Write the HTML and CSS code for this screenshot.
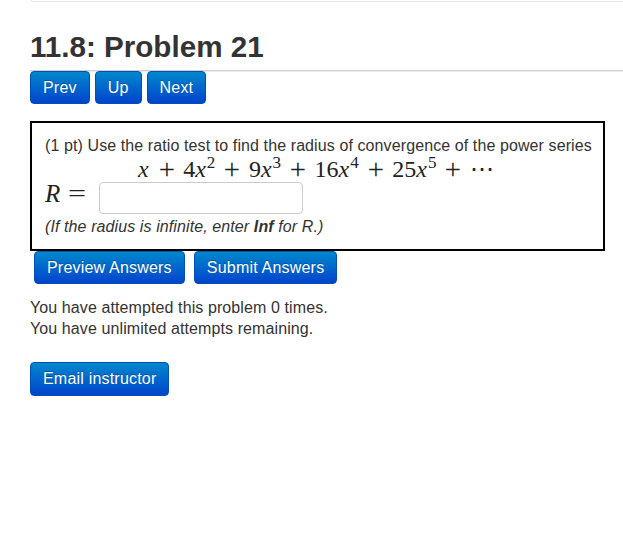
FILE: index.html
```html
<!DOCTYPE html>
<html>
<head>
<meta charset="utf-8">
<link rel="stylesheet" href="styles.css">
</head>
<body>
<div class="page">
  <div class="topbox"></div>
  <h1 class="title">11.8: Problem 21</h1>
  <div class="rule"></div>
  <div class="nav">
    <a class="btn">Prev</a>
    <a class="btn">Up</a>
    <a class="btn">Next</a>
  </div>
  <div class="problem">
    <div class="statement">(1 pt) Use the ratio test to find the radius of convergence of the power series</div>
    <div class="math"><i>x</i><span class="op">+</span>4<i>x</i><sup>2</sup><span class="op">+</span>9<i>x</i><sup>3</sup><span class="op">+</span>16<i>x</i><sup>4</sup><span class="op">+</span>25<i>x</i><sup>5</sup><span class="op">+</span><span class="dots">⋯</span></div>
    <div class="answer"><span class="rlabel"><i>R</i><span class="eq">=</span></span><span class="input"></span></div>
    <div class="hint">(If the radius is infinite, enter <b>Inf</b> for R.)</div>
  </div>
  <div class="actions">
    <a class="btn">Preview Answers</a>
    <a class="btn">Submit Answers</a>
  </div>
  <p class="attempts">You have attempted this problem 0 times.<br>You have unlimited attempts remaining.</p>
  <div class="email"><a class="btn btn-tall">Email instructor</a></div>
</div>
</body>
</html>
```

FILE: styles.css
```css
html, body {
  margin: 0;
  padding: 0;
  background: #fff;
}
body {
  font-family: "Liberation Sans", Arial, sans-serif;
  color: #333;
  font-size: 16px;
  letter-spacing: 0.1px;
}
.page {
  padding-left: 30px;
  overflow: hidden;
}
.topbox {
  height: 1px;
  margin-left: 1px;
  margin-right: -10px;
  border: 1px solid #e3e3e3;
  border-top: none;
  border-radius: 0 0 0 4px;
}
.title {
  margin: 28px 0 0 0;
  font-size: 29.6px;
  line-height: 33px;
  font-weight: bold;
  letter-spacing: 0;
  color: #333;
}
.rule {
  margin-top: 7px;
  height: 0;
  border-top: 1px solid #cfcfcf;
  border-bottom: 1px solid #eeeeee;
}
.nav {
  display: flex;
  gap: 5px;
  margin-top: -1px;
}
.btn {
  display: inline-block;
  font-size: 16px;
  letter-spacing: 0.2px;
  line-height: 20px;
  padding: 6px 12px 5px;
  color: #fff;
  border: 1px solid #0050b3;
  border-radius: 4px;
  background: linear-gradient(to bottom, #0088cc, #0044cc);
  text-shadow: 0 -1px 0 rgba(0,0,0,0.25);
}
.btn-tall {
  padding-bottom: 6px;
}
.problem {
  margin-top: 17px;
  width: 545px;
  border: 2px solid #000;
  padding: 13px 13px 12px 13px;
}
.statement {
  line-height: 20px;
  white-space: nowrap;
}
.math {
  font-family: "Liberation Serif", "Times New Roman", serif;
  font-size: 24px;
  line-height: 26px;
  letter-spacing: 0;
  margin-left: 93px;
  color: #222;
  white-space: nowrap;
}
.math i {
  margin-right: 1px;
}
.math sup {
  font-size: 17px;
  vertical-align: 9px;
  line-height: 0;
}
.op {
  display: inline-block;
  margin: 0 10px;
  transform: scale(1.2);
}
.dots {
  letter-spacing: 2px;
}
.answer {
  display: flex;
  align-items: flex-start;
}
.rlabel {
  font-family: "Liberation Serif", "Times New Roman", serif;
  font-size: 25px;
  line-height: 32px;
  letter-spacing: 0;
  margin-top: -4px;
  width: 54px;
  color: #222;
}
.eq {
  display: inline-block;
  margin-left: 10px;
  transform: scaleX(1.28);
}
.input {
  display: block;
  width: 202px;
  height: 30px;
  border: 1px solid #cccccc;
  border-radius: 4px;
  background: #fff;
}
.hint {
  font-style: italic;
  margin-top: 3px;
  line-height: 20px;
}
.hint b {
  font-weight: bold;
}
.actions {
  display: flex;
  gap: 9px;
  margin-left: 4px;
}
.attempts {
  margin: 13px 0 0 0;
  line-height: 21px;
}
.email {
  margin-top: 23px;
  display: flex;
}
```
